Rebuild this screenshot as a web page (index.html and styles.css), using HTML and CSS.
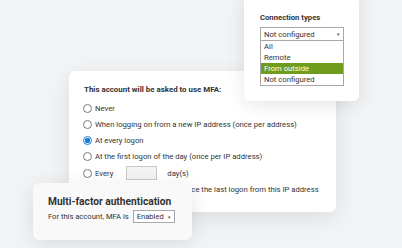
FILE: index.html
```html
<!DOCTYPE html>
<html lang="en">
<head>
    <meta charset="UTF-8">
    <meta name="viewport" content="width=device-width, initial-scale=1.0">
    <title>MFA settings</title>
    <link rel="stylesheet" href="styles.css">
</head>
<body>
    <div class="canvas">
        <!-- Main MFA policy card -->
        <div class="card card-main">
            <div class="card-title">This account will be asked to use MFA:</div>
            <div class="option"><span class="radio"></span>Never</div>
            <div class="option"><span class="radio"></span>When logging on from a new IP address (once per address)</div>
            <div class="option"><span class="radio checked"></span>At every logon</div>
            <div class="option"><span class="radio"></span>At the first logon of the day (once per IP address)</div>
            <div class="option option-every"><span class="radio"></span>Every <span class="days-input"></span> day(s)</div>
            <div class="option"><span class="radio"></span>Ask again after 365 days since the last logon from this IP address</div>
        </div>

        <!-- Connection types dropdown -->
        <div class="card card-conn">
            <div class="conn-label">Connection types</div>
            <div class="select select-wide">Not configured<span class="caret">&#9662;</span></div>
            <ul class="dropdown">
                <li>All</li>
                <li>Remote</li>
                <li class="selected">From outside</li>
                <li>Not configured</li>
            </ul>
        </div>

        <!-- MFA toggle card -->
        <div class="card card-mfa">
            <div class="mfa-title">Multi-factor authentication</div>
            <div class="mfa-row">
                For this account, MFA is
                <div class="select select-small">Enabled<span class="caret">&#9662;</span></div>
            </div>
        </div>
    </div>
</body>
</html>
```

FILE: styles.css
```css
body, html {
    margin: 0;
    padding: 0;
    width: 100%;
    height: 100%;
    background: #f2f3f5;
    font-family: Roboto, 'Noto Sans', sans-serif;
    color: #333;
    overflow: hidden;
}

.canvas {
    position: relative;
    width: 402px;
    height: 248px;
}

/* Floating cards */
.card {
    position: absolute;
    background: #fff;
    border-radius: 6px;
    box-sizing: border-box;
}

.card-main {
    left: 69px;
    top: 71px;
    width: 267px;
    height: 141px;
    padding: 13px 0 0 14px;
    font-size: 7.7px;
    box-shadow: 0 6px 22px rgba(0, 0, 0, 0.09);
    z-index: 1;
}

.card-title {
    font-size: 7.9px;
    font-weight: 700;
    height: 12px;
    line-height: 12px;
    margin-left: 1px;
    margin-bottom: 4px;
}

.option {
    display: flex;
    align-items: center;
    height: 16.2px;
    white-space: nowrap;
}

.option-every {
    height: 17px;
}

.radio {
    width: 9px;
    height: 9px;
    border: 1px solid #7a7a7a;
    border-radius: 50%;
    margin-right: 3px;
    box-sizing: border-box;
    background: #fff;
    flex-shrink: 0;
}

.radio.checked {
    border-color: #1a7fd4;
    background: radial-gradient(circle, #1a7fd4 0 2.5px, #fff 3px);
}

.days-input {
    display: inline-block;
    width: 31px;
    height: 14px;
    border: 1px solid #c9c9c9;
    background: #f3f3f3;
    box-sizing: border-box;
    margin: 0 10px 0 13px;
}

/* Connection types card */
.card-conn {
    left: 244px;
    top: -10px;
    width: 115px;
    height: 111px;
    padding: 22px 0 0 16px;
    font-size: 7.7px;
    box-shadow: 0 4px 18px rgba(0, 0, 0, 0.1);
    z-index: 2;
}

.conn-label {
    font-weight: 700;
    height: 12px;
    line-height: 12px;
    margin-bottom: 3px;
}

.select {
    display: flex;
    align-items: center;
    justify-content: space-between;
    border: 1px solid #a8a8a8;
    box-sizing: border-box;
    background: #fff;
    padding: 0 3px;
}

.select-wide {
    width: 84px;
    height: 14px;
}

.caret {
    font-size: 5px;
    color: #555;
}

.dropdown {
    list-style: none;
    margin: 0;
    padding: 0;
    width: 84px;
    border: 1px solid #a8a8a8;
    border-top: none;
    box-sizing: border-box;
}

.dropdown li {
    height: 11px;
    line-height: 11px;
    padding-left: 3px;
}

.dropdown li.selected {
    background: #6f9c1d;
    color: #fff;
}

/* MFA card */
.card-mfa {
    left: 33px;
    top: 183px;
    width: 159px;
    height: 57px;
    padding: 12px 0 0 15px;
    background: #f9f9f9;
    box-shadow: 0 4px 20px rgba(0, 0, 0, 0.1);
    z-index: 3;
}

.mfa-title {
    font-size: 10.2px;
    font-weight: 700;
    height: 14px;
    line-height: 14px;
    margin-bottom: 1px;
}

.mfa-row {
    display: flex;
    align-items: center;
    gap: 4px;
    font-size: 7.6px;
}

.select-small {
    width: 42px;
    height: 13px;
}
```
